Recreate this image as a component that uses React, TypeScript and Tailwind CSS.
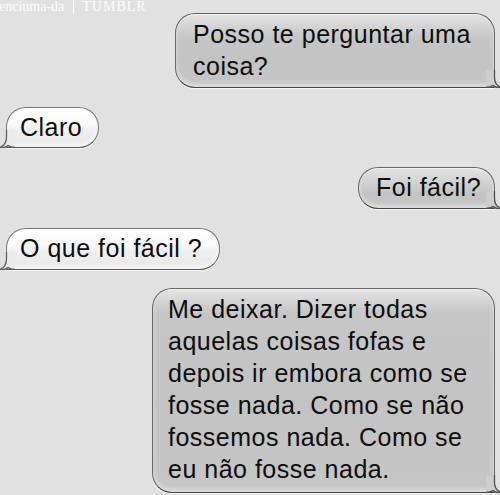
import React from "react";

type Side = "sent" | "received";

function Tail({ side }: { side: Side }) {
  const fill = side === "sent" ? "#cdcdcd" : "#ebebeb";
  const stroke = side === "sent" ? "#4f4f4f" : "#5f5f5f";
  const d = "M8.5 0 V7 C8.5 12 10.5 16 15.5 17.5 C12 18 9 17 7 15.6 C5 17.2 2.5 17.5 0 17.5";
  return (
    <svg
      width="16"
      height="18"
      viewBox="0 0 16 18"
      className={
        side === "sent"
          ? "absolute -right-[8px] -bottom-[1px]"
          : "absolute -left-[8px] -bottom-[1px] -scale-x-100"
      }
    >
      <path d={d + " L0 0 Z"} fill={fill} />
      <path d={d} fill="none" stroke={stroke} strokeWidth="1.3" />
    </svg>
  );
}

function Bubble({
  side,
  className,
  children,
}: {
  side: Side;
  className: string;
  children: React.ReactNode;
}) {
  const base =
    side === "sent"
      ? "self-end mr-[5px] rounded-[20px] rounded-br-none border border-[#666] border-b-[#444] bg-[linear-gradient(to_bottom,#e3e3e3_0px,#d2d2d2_14px,#c6c6c6_24px,#c3c3c3_60%,#c6c6c6_100%)] shadow-[inset_0_-3px_4px_rgba(255,255,255,0.45),inset_0_1px_1px_rgba(255,255,255,0.6),0_1px_1px_rgba(255,255,255,0.8)]"
      : "self-start ml-[6px] rounded-[20px] rounded-bl-none border border-[#777] border-b-[#555] bg-[linear-gradient(to_bottom,#ffffff_0px,#fafafa_16px,#f0f0f0_55%,#e8e8e8_100%)] shadow-[inset_0_-3px_4px_rgba(255,255,255,0.6),0_1px_1px_rgba(255,255,255,0.8)]";
  return (
    <div
      className={`relative whitespace-nowrap text-[25px] leading-[32px] tracking-[0.5px] text-[#0d0d0d] font-['Liberation_Sans',Arial,sans-serif] ${base} ${className}`}
    >
      {children}
      <Tail side={side} />
    </div>
  );
}

export default function App() {
  return (
    <div className="relative w-[500px] h-[495px] overflow-hidden bg-[#e1e1e1]">
      <div className="absolute left-0 top-0 -ml-[1px] flex items-center text-[14px] leading-[14px] text-white/90 font-['Liberation_Serif','Times_New_Roman',serif]">
        <span>enciuma-da</span>
        <span className="ml-[9px] mr-[8px] h-[14px] w-px bg-white/80" />
        <span className="tracking-[1px]">TUMBLR</span>
      </div>

      <div className="flex flex-col pt-[13px]">
        <Bubble side="sent" className="w-[320px] pl-[17px] pt-[4px] pb-[5px]">
          Posso te perguntar uma
          <br />
          coisa?
        </Bubble>

        <Bubble side="received" className="mt-[19px] w-[93px] pl-[13px] pt-[3px] pb-[4px]">
          Claro
        </Bubble>

        <Bubble side="sent" className="mt-[19px] w-[137px] pl-[17px] pt-[3px] pb-[5px]">
          Foi fácil?
        </Bubble>

        <Bubble side="received" className="mt-[19px] w-[214px] pl-[13px] pt-[3px] pb-[5px]">
          O que foi fácil ?
        </Bubble>

        <Bubble side="sent" className="mt-[18px] w-[343px] pl-[15px] pt-[4px] pb-[7px]">
          Me deixar. Dizer todas
          <br />
          aquelas coisas fofas e
          <br />
          depois ir embora como se
          <br />
          fosse nada. Como se não
          <br />
          fossemos nada. Como se
          <br />
          eu não fosse nada.
        </Bubble>
      </div>
    </div>
  );
}
